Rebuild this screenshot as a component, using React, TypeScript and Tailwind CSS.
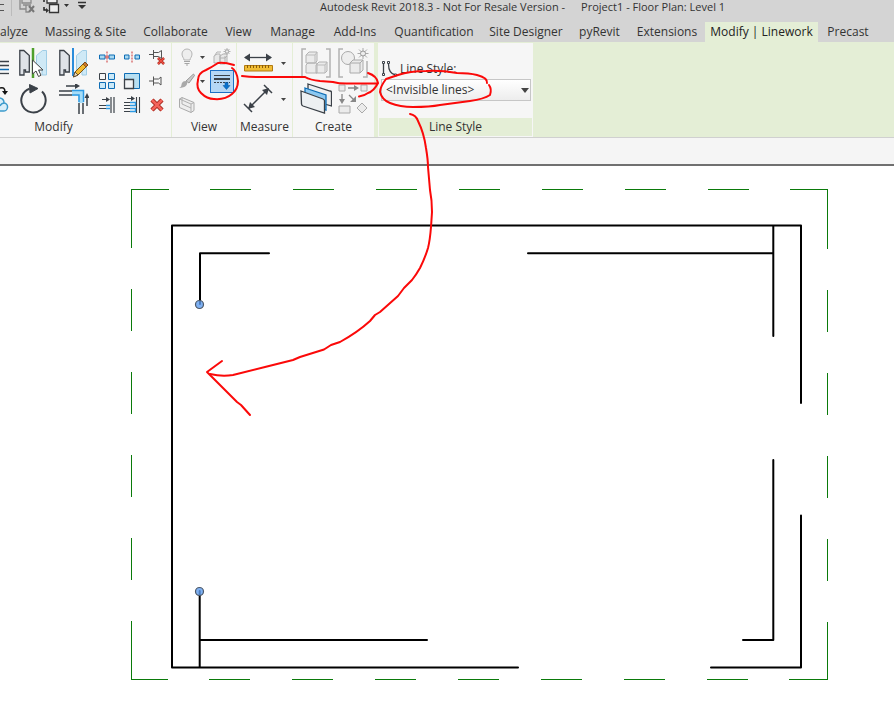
import React from "react";

type IconProps = { box: string; w: number; h: number; children: React.ReactNode; className?: string };

function Icon({ box, w, h, children, className = "" }: IconProps) {
  return (
    <svg viewBox={box} width={w} height={h} fill="none" aria-hidden="true" className={`shrink-0 ${className}`}>
      {children}
    </svg>
  );
}

function Caret() {
  return (
    <svg viewBox="0 0 5 3" width="5" height="3" aria-hidden="true" className="shrink-0">
      <path d="M0 0h5L2.5 3z" fill="#444" />
    </svg>
  );
}

function Tool({ label, className = "", children }: { label: string; className?: string; children: React.ReactNode }) {
  return (
    <button type="button" aria-label={label} className={`flex items-center justify-center ${className}`}>
      {children}
    </button>
  );
}

type PanelProps = { title: string; className: string; titleClass?: string; children: React.ReactNode };

function Panel({ title, className, titleClass = "", children }: PanelProps) {
  return (
    <section className={`flex flex-col border-r border-[#e4eed6] bg-[#f6f6f6] pt-0.5 ${className}`}>
      <div className="h-[72px]">{children}</div>
      <h2 className={`text-center leading-5 ${titleClass}`}>{title}</h2>
    </section>
  );
}

const INK = "#3b4148";
const BLUE = "#0e6db5";
const SKY = "#a9d8f0";

function MirrorShapes() {
  return (
    <>
      <path d="M.8 2.500h4l5.500 5V24H6.500v-2H5v5H.8z" fill="#dfe3e8" stroke={INK} strokeWidth="1.300" />
      <path d="M27.500 2.500h-4l-6 5V24h3v-2h2.500v5h4.500z" fill="#cfe9f6" stroke="#9fcde6" />
    </>
  );
}

function ModifyPanel() {
  return (
    <Panel title="Modify" className="w-[172px]" titleClass="pr-16">
      <div className="flex h-full">
        <div className="grid w-[94px] grid-cols-[14px_40px_40px] grid-rows-2">
          <Tool label="Offset" className="justify-start">
            <Icon box="0 0 14 30" w={14} h={30}>
              <path d="M0 13.500h9M0 17.500h9" stroke={INK} strokeWidth="1.300" />
              <path d="M0 21.500h9" stroke={BLUE} strokeWidth="1.500" />
              <path d="M0 25.500h9" stroke={INK} strokeWidth="1.300" />
            </Icon>
          </Tool>
          <Tool label="Mirror - Pick Axis">
            <Icon box="0 0 30 30" w={30} h={30}>
              <MirrorShapes />
              <path d="M14 0v30" stroke="#4fa02c" strokeWidth="2.500" />
              <path d="M13.500 12v14l3.500-3 2.500 5.500 2.500-1.200-2.500-5.300h4.500z" fill="#fff" stroke="#444" />
            </Icon>
          </Tool>
          <Tool label="Mirror - Draw Axis">
            <Icon box="0 0 30 30" w={30} h={30}>
              <MirrorShapes />
              <path d="M14 0v28" stroke="#2b8ddb" strokeWidth="2" />
              <path d="m14.500 29 1.500-5L26 14l3 3-10 10z" fill="#f2b92f" stroke="#7c5415" />
              <path d="m24 16 2-2 3 3-2 2z" fill="#c8742d" stroke="#6b4419" strokeWidth=".7" />
              <path d="m14.500 29 1.500-5 3 3z" fill="#f5dfb6" stroke="#493a28" strokeWidth=".8" />
            </Icon>
          </Tool>
          <Tool label="Copy" className="justify-start">
            <Icon box="0 0 14 30" w={14} h={30}>
              <path d="M0 4c3-1 5 0 5 4" stroke="#111" strokeWidth="1.500" />
              <path d="M2 7h6l-3 4z" fill="#111" />
              <path d="M0 14a5 5 0 0 1 4 5 4 4 0 0 1-1 8H0" fill="#d9eef9" stroke="#3b9acb" strokeWidth="1.500" />
              <path d="M0 22a5 5 0 0 1 4-3" stroke="#3b9acb" strokeWidth="1.500" />
            </Icon>
          </Tool>
          <Tool label="Rotate">
            <Icon box="0 0 30 30" w={30} h={30}>
              <path d="M23 7.500A12.200 12.200 0 1 1 10.500 4.700" stroke={INK} strokeWidth="2" />
              <path d="M10.500.5 19 4.500 11 9z" fill={INK} stroke={INK} strokeWidth="1" />
            </Icon>
          </Tool>
          <Tool label="Trim or Extend to Corner">
            <Icon box="0 0 30 30" w={30} h={30}>
              <path d="M0 7h13M0 11h13" stroke={INK} strokeWidth="1.500" />
              <path d="M20 19v11M24 19v11" stroke={INK} strokeWidth="1.500" />
              <path d="M13 9h9v10" stroke="#a8ddf7" strokeWidth="5" />
              <path d="M13 6.500h11.500V18M13 11h7v7" stroke="#2d9ae4" strokeWidth="1.500" />
              <path d="M7 2h12M28 22V12" stroke={INK} strokeWidth="1.500" />
              <path d="m16-1 5 3-5 3zM25.500 14l2.500-5 2.500 5z" fill={INK} />
            </Icon>
          </Tool>
        </div>
        <div className="grid w-[76px] grid-cols-3 grid-rows-3">
          <Tool label="Split Element">
            <Icon box="0 0 18 18" w={18} h={18}>
              <path d="M1.500 7h5.500v4H1.500zM11 7h5.500v4H11z" fill={SKY} stroke={BLUE} />
              <path d="M9 3.500v12" stroke="#c33" strokeDasharray="2 1" />
              <path d="M7 9h4" stroke="#c33" />
            </Icon>
          </Tool>
          <Tool label="Split with Gap">
            <Icon box="0 0 18 18" w={18} h={18}>
              <path d="M1.500 7h4.500v4H1.500zM12 7h4.500v4H12z" fill={SKY} stroke={BLUE} />
              <path d="M9 3.500v12" stroke="#c33" strokeDasharray="2 1" />
            </Icon>
          </Tool>
          <Tool label="Unpin">
            <Icon box="0 0 18 18" w={18} h={18}>
              <path d="M1 6.500h4M5.500 2v9M5.500 4.500h5l3-2v8l-3-2h-5z" fill="#f6f6f6" stroke="#555" />
              <path d="m10 10 6 6m0-6-6 6" stroke="#a5281c" strokeWidth="2.500" />
              <path d="m10 10 6 6m0-6-6 6" stroke="#f04e43" strokeWidth="1.200" />
            </Icon>
          </Tool>
          <Tool label="Array">
            <Icon box="0 0 18 18" w={18} h={18}>
              <path d="M1.500 1.500h6v6h-6z" stroke={INK} />
              <path d="M10.500 1.500h6v6h-6zM1.500 10.500h6v6h-6zM10.500 10.500h6v6h-6z" fill="#cbe9f8" stroke={BLUE} />
            </Icon>
          </Tool>
          <Tool label="Scale">
            <Icon box="0 0 18 18" w={18} h={18}>
              <path d="M1.500 1.500h15v15h-15z" fill="#b7dff2" stroke={BLUE} />
              <path d="M1.500 7.500h9v9h-9z" fill="#f1f3f5" stroke={INK} strokeWidth="1.300" />
            </Icon>
          </Tool>
          <Tool label="Pin">
            <Icon box="0 0 18 18" w={18} h={18}>
              <path d="M1 9h4M5.500 4.500v9M5.500 7h5l2.500-2v8l-2.500-2h-5z" fill="#f6f6f6" stroke="#555" />
            </Icon>
          </Tool>
          <Tool label="Trim Single Element">
            <Icon box="0 0 18 18" w={18} h={18}>
              <path d="M4 3.500h6M1 9.500h7M1 12.500h7M13 1v16M16 1v16" stroke={INK} strokeWidth="1.200" />
              <path d="m8 1 4 2.500L8 6z" fill={INK} />
              <path d="M8 9.500h4M8 12.500h4" stroke="#2d9ae4" strokeWidth="1.500" />
            </Icon>
          </Tool>
          <Tool label="Trim Multiple Elements">
            <Icon box="0 0 18 18" w={18} h={18}>
              <path d="M4 2.500h6M1 6.500h6M1 9.500h6M1 12.500h6M1 15.500h6M13.500 1v16M16.500 1v16" stroke={INK} strokeWidth="1.100" />
              <path d="m8 0 4 2.500L8 5z" fill={INK} />
              <path d="M7 6.500h5.500v3H7M7 12.500h5.500v3H7" stroke="#2d9ae4" strokeWidth="1.300" />
            </Icon>
          </Tool>
          <Tool label="Delete">
            <Icon box="0 0 18 18" w={18} h={18}>
              <path d="m4 4 10 10m0-10L4 14" stroke="#a3261b" strokeWidth="4.500" />
              <path d="m4 4 10 10m0-10L4 14" stroke="#f4625a" strokeWidth="2.500" />
            </Icon>
          </Tool>
        </div>
      </div>
    </Panel>
  );
}

function ViewPanel() {
  return (
    <Panel title="View" className="w-[65px]">
      <div className="grid h-full grid-cols-[38px_24px] grid-rows-3">
        <Tool label="Hide in View" className="justify-start gap-1 pl-1.5">
          <Icon box="0 0 18 18" w={18} h={18}>
            <path d="M6 12c0-2-2-3-2-6a5 5 0 0 1 10 0c0 3-2 4-2 6z" fill="#eee" stroke="#b5b5b5" />
            <path d="M6 13.500h6M6.500 15.500h5M8 17h2" stroke="#a5a5a5" />
          </Icon>
          <Caret />
        </Tool>
        <Tool label="Displace Elements">
          <Icon box="0 0 18 18" w={18} h={18}>
            <path d="M1 8l3-2h3v9H1zM7 8l3-2h4v8l-2 2H7z" fill="#e8e8e8" stroke="#b2b2b2" />
            <path d="M8 4h-4l-2 3M12 8v8M7 10h5l2-2" stroke="#b2b2b2" />
            <path d="M14 0v7M10.500 3.500h7M11.500 1l5 5m0-5-5 5" stroke="#b5b5b5" />
            <circle cx="14" cy="3.500" r="1.700" fill="#eee" stroke="#a5a5a5" />
          </Icon>
        </Tool>
        <Tool label="Override Graphics in View" className="justify-start gap-1 pl-1.5">
          <Icon box="0 0 18 18" w={18} h={18}>
            <path d="m8 9 7.500-7 1 1.500L11 11z" fill="#ccc" stroke="#999" />
            <path d="M1 16c3-1 2-3 3-5s4-3 5-1-1 6-8 6z" fill="#aaa" />
          </Icon>
          <Caret />
        </Tool>
        <Tool label="Linework" className="h-[23px] self-center border border-[#1c6fc4] bg-[#b5d7f5]">
          <Icon box="0 0 20 20" w={20} h={20}>
            <path d="M2 4.500h16" stroke={INK} />
            <path d="M2 8h16" stroke={INK} strokeWidth="2" />
            <path d="M2 11.500h16" stroke={INK} strokeDasharray="2 1" />
            <path d="M13 11.500h3v3h2l-3.500 4-3.500-4h2z" fill="#0872cf" stroke="#07569b" strokeWidth=".5" />
          </Icon>
        </Tool>
        <Tool label="Selection Box" className="justify-start pl-1.5">
          <Icon box="0 0 18 18" w={18} h={18}>
            <path d="M1.500 3 4 1.500l12 5v8l-3 2-11.500-5z" fill="#eee" stroke="#aaa" />
            <path d="m1.500 3 11.500 5v8.500M13 8l3-1.500M4 1.500V8M4 8l9 4" stroke="#b0b0b0" />
          </Icon>
        </Tool>
      </div>
    </Panel>
  );
}

function MeasurePanel() {
  return (
    <Panel title="Measure" className="w-14">
      <div className="grid h-full grid-rows-2">
        <Tool label="Measure" className="justify-start gap-2 pl-1.5">
          <Icon box="0 0 30 30" w={30} h={30}>
            <path d="M2 9.500h26" stroke={INK} strokeWidth="1.300" />
            <path d="M7 5.500 1 9.500l6 4zM23 5.500l6 4-6 4z" fill={INK} />
            <path d="M1.500 17.500h28v5.500h-28z" fill="#f0bd35" stroke="#b27a10" />
            <path d="M4.500 17v3M7.500 17v3M10.500 17v3M13.500 17v3M16.500 17v3M19.500 17v3M22.500 17v3M25.500 17v3" stroke="#8a5c0b" />
          </Icon>
          <Caret />
        </Tool>
        <Tool label="Aligned Dimension" className="justify-start gap-2 pl-1.5">
          <Icon box="0 0 30 30" w={30} h={30}>
            <path d="M6 24 25 5M1 20l8 8M21 1l8 8" stroke={INK} strokeWidth="1.500" />
            <path d="m5 25 2-7 5 5zM26 4l-7 2 5 5z" fill={INK} />
          </Icon>
          <Caret />
        </Tool>
      </div>
    </Panel>
  );
}

function CreatePanel() {
  return (
    <Panel title="Create" className="w-[82px]">
      <div className="grid h-full grid-cols-2 grid-rows-2 pr-0.5 pl-1">
        <Tool label="Create Assembly">
          <Icon box="0 0 32 32" w={32} h={32}>
            <path d="M6 2H2v28h4M26 2h4v28h-4" stroke="#b2b2b2" strokeWidth="1.500" />
            <path d="m6 8 3-3h8v9l-2 2H6zM6 18l2-2h9v10H6zM16 18l3-3h8v9l-2 2h-9z" fill="#ebebeb" stroke="#b2b2b2" />
            <path d="M6 8h9v8M15 8l2-3M16 18h9v8M25 18l2-3" stroke="#bbb" />
          </Icon>
        </Tool>
        <Tool label="Create Group">
          <Icon box="0 0 32 32" w={32} h={32}>
            <path d="M6 2H2v28h4M26 30h4V14" stroke="#b2b2b2" strokeWidth="1.500" />
            <circle cx="11" cy="11" r="6.500" fill="#eee" stroke="#aaa" />
            <path d="m13 16 3-3h10v10l-3 3H13z" fill="#ebebeb" stroke="#aaa" />
            <path d="M13 16h10v10M23 16l3-3" stroke="#aaa" />
            <path d="M26 1v11M20.500 6.500h11M22 2.500l8 8m0-8-8 8" stroke="#aaa" />
            <circle cx="26" cy="6.500" r="2.500" fill="#eee" stroke="#999" />
          </Icon>
        </Tool>
        <Tool label="Create Parts">
          <Icon box="0 0 32 32" w={32} h={32}>
            <path d="m8 1 22 7c1 0 1.500.6 1.500 1.500V23L8 16z" fill="#f0f0f0" stroke={INK} strokeWidth="1.300" />
            <path d="m5 5 21 7v15L5 20z" fill="#8cc9f2" stroke={BLUE} strokeWidth="1.300" />
            <path d="m1 8 22 8c1 .3 1.500 1 1.500 2v12L3 23c-1-.4-1.500-1-1.500-2z" fill="#edf0f2" stroke={INK} strokeWidth="1.300" />
          </Icon>
        </Tool>
        <Tool label="Create Similar">
          <Icon box="0 0 32 32" w={32} h={32}>
            <path d="M2 2h6v6H2zM24 2h6v6h-6zM2 23h11v7H2zM20 25l5-5 5 5-5 5z" fill="#ebebeb" stroke="#aaa" />
            <path d="M11 5h8M5 11v6M12 12l5 5" stroke="#888" strokeWidth="1.300" />
            <path d="m17 2 5 3-5 3zM2 16h6l-3 5zM19 13v6h-6z" fill="#888" />
          </Icon>
        </Tool>
      </div>
    </Panel>
  );
}

function LineStylePanel() {
  return (
    <section className="ml-[3px] flex w-[155px] flex-col border-r border-[#f6f6f6] bg-[#f6f6f6] pl-px">
      <div className="h-[75px] pt-4 pr-px pl-0.5">
        <div className="flex h-5 items-center gap-0.5">
          <Icon box="0 0 17 18" w={17} h={18}>
            <path d="M2.500 4v10M7.500 4c0 6 2 10 7 11" stroke={INK} strokeWidth="1.300" />
            <path d="M1.500 1.500h2v2h-2zM1.500 13.500h2v2h-2zM6.500 1.500h2v2h-2zM13.500 14h2v2h-2z" fill="#f6f6f6" stroke={INK} />
          </Icon>
          <label htmlFor="line-style">Line Style:</label>
        </div>
        <div className="relative">
          <select
            id="line-style"
            defaultValue="invisible"
            className="h-[22px] w-full appearance-none border border-[#c6c6c6] bg-linear-to-b from-white to-[#ededed] px-1 outline-none"
          >
            <option value="invisible">&lt;Invisible lines&gt;</option>
          </select>
          <svg viewBox="0 0 8 5" width="8" height="5" aria-hidden="true" className="pointer-events-none absolute top-[9px] right-0.5">
            <path d="M0 0h8L4 5z" fill="#444" />
          </svg>
        </div>
      </div>
      <h2 className="bg-[#e4eed6] text-center leading-[18px]">Line Style</h2>
    </section>
  );
}

const TABS: { name: string; width: string }[] = [
  { name: "alyze", width: "w-9 pr-2.5 text-right" },
  { name: "Massing & Site", width: "w-[99px] text-center" },
  { name: "Collaborate", width: "w-[81px] text-center" },
  { name: "View", width: "w-[45px] text-center" },
  { name: "Manage", width: "w-[63px] text-center" },
  { name: "Add-Ins", width: "w-[62px] text-center" },
  { name: "Quantification", width: "w-24 text-center" },
  { name: "Site Designer", width: "w-[88px] text-center" },
  { name: "pyRevit", width: "w-[59px] text-center" },
  { name: "Extensions", width: "w-[76px] text-center" },
  { name: "Modify | Linework", width: "w-[113px] bg-[#e4eed6] text-center text-[#222]" },
  { name: "Precast", width: "w-[60px] text-center" },
];

function QuickAccess() {
  return (
    <header className="flex h-[22px] items-start">
      <div className="flex w-80 shrink-0">
        <Icon box="0 0 90 16" w={90} h={16}>
          <path d="M0 4.500h4M0 10.500h4" stroke="#555" />
          <path d="M11.500 0v16" stroke="#bbb" />
          <path d="M20 0v9h6M22 0v3h9V0M23 5h8M26 5v7h3" stroke="#8a8a8a" strokeWidth="1.300" />
          <path d="m29 6 5 6m0-6-5 6" stroke="#777" strokeWidth="2" />
          <path d="M47 0v3h10V0" fill="#eee" stroke="#333" strokeWidth="1.300" />
          <path d="M49.500 4.500h9v8h-9z" fill="#eee" stroke="#333" strokeWidth="1.300" />
          <path d="M44 0v2M44 7v3h3" stroke="#222" strokeWidth="1.500" />
          <path d="m46 8 3 2.500-3 2.500zM64 4h5l-2.500 3z" fill="#333" />
          <path d="M78 2.500h8" stroke="#333" strokeWidth="1.500" />
          <path d="M78 5h8l-4 4z" fill="#333" />
        </Icon>
      </div>
      <h1 className="flex gap-4 text-[11px] leading-[14px] whitespace-nowrap">
        <span>Autodesk Revit 2018.3 - Not For Resale Version -</span>
        <span>Project1 - Floor Plan: Level 1</span>
      </h1>
    </header>
  );
}

function FloorPlan() {
  return (
    <svg viewBox="0 166 894 558" width="894" height="558" fill="none" role="img" aria-label="Floor plan">
      <g stroke="#0a7a0a">
        <path d="M131 189.500h38M210 189.500h41M293 189.500h41M376 189.500h41M459 189.500h41M542 189.500h41M625 189.500h41M708 189.500h41M790 189.500h38" />
        <path d="M131 679.500h37M209 679.500h41M292 679.500h41M375 679.500h41M458 679.500h41M541 679.500h41M624 679.500h41M707 679.500h41M789 679.500h39" />
        <path d="M131.500 189v59M131.500 289v42M131.500 372v42M131.500 455v42M131.500 538v42M131.500 621v59" />
        <path d="M827.500 189v60M827.500 290v42M827.500 373v42M827.500 456v42M827.500 539v42M827.500 622v58" />
      </g>
      <g stroke="#000" strokeWidth="2" strokeLinecap="round" strokeLinejoin="round">
        <path d="M801 403V225.500H172V667.500H518M711 667.500h90V515.500" />
        <path d="M269 253.200h-69V304M528 253.200h245M773.300 226v110M773.300 460v180H743" />
        <path d="M199.700 591v76M200 640h227" />
      </g>
      <g fill="#5f9df0" fillOpacity=".8" stroke="#4d5866" strokeWidth="1.200">
        <circle cx="199.500" cy="304.500" r="4" />
        <circle cx="199.500" cy="591.500" r="4" />
      </g>
    </svg>
  );
}

function Markup() {
  return (
    <svg
      viewBox="0 0 894 724"
      width="894"
      height="724"
      fill="none"
      stroke="#fb0909"
      strokeWidth="2"
      strokeLinecap="round"
      strokeLinejoin="round"
      aria-hidden="true"
      className="pointer-events-none absolute top-0 left-0"
    >
      <path d="M234 65Q224 62 218 63Q212 67 206 70Q198 73 198 80Q196 88 201 93Q207 99 214 99Q225 100 232 94Q238 89 238 81Q237 71 232 68" />
      <path d="M242 76Q250 77 257 77L305 77Q310 80 320 81L333 82Q340 84 350 83.500L378 83.500M368 73Q377 76 378 83Q374 91 368 93Q364 96 359 96.500" />
      <path d="M487 83Q488 78 477 75Q469 73 457 73Q440 70 426 71Q410 71 398 75L386 79Q380 87 380 92Q382 100 390 103Q400 107 413 107Q430 107 440 105L470 101Q484 99 490 95Q492 89 489 85" />
      <path d="M410 114Q416 115 418 121Q424 133 426 148Q428 160 428 167L430 190Q432 200 432 212L431 227Q430 240 428 248Q425 258 420 268Q416 275 412 280L404 288L398 296L380 312L375 315L370 321Q358 332 340 342L331 345L324 349.500L300 357L293 360L267 366.500L233 375Q222 377 210 374" />
      <path d="M222 361 207 372 237 402 241 405 250 415" />
    </svg>
  );
}

export default function App() {
  return (
    <div className="relative min-h-screen overflow-hidden bg-white font-['Open_Sans','Noto_Sans',sans-serif] text-[12px] text-[#333]">
      <div className="bg-[#d4d4d4]">
        <QuickAccess />
        <nav className="flex h-5">
          {TABS.map((tab) => (
            <button key={tab.name} type="button" className={`shrink-0 leading-5 whitespace-nowrap ${tab.width}`}>
              {tab.name}
            </button>
          ))}
        </nav>
      </div>
      <div className="flex h-24 border-y border-t-[#e4eed6] border-b-[#d0d0d0] bg-[#e4eed6]">
        <ModifyPanel />
        <ViewPanel />
        <MeasurePanel />
        <CreatePanel />
        <LineStylePanel />
      </div>
      <div className="h-7 border-b-2 border-[#707070] bg-[#f5f5f5]" />
      <main>
        <FloorPlan />
      </main>
      <Markup />
    </div>
  );
}
